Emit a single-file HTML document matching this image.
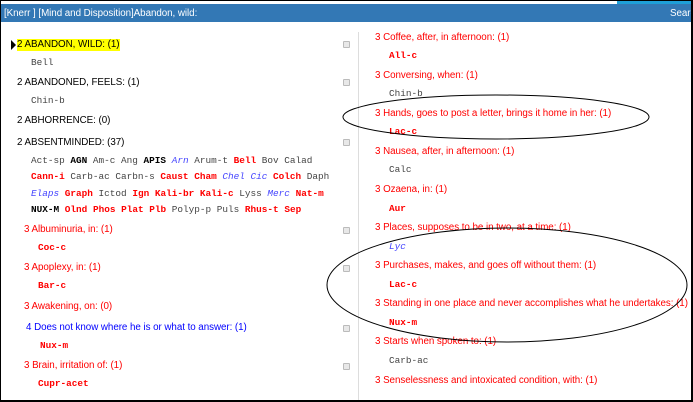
<!DOCTYPE html>
<html><head><meta charset="utf-8"><style>
*{margin:0;padding:0;box-sizing:border-box}
body{width:693px;height:402px;overflow:hidden;background:#fff;position:relative;font-family:"Liberation Sans",sans-serif}
.t{position:absolute;white-space:nowrap;font-size:9.8px;line-height:12px;letter-spacing:-0.05px}
.m{position:absolute;white-space:nowrap;font-family:"Liberation Mono",monospace;font-size:9.4px;line-height:12px;color:#444}
.r{color:#f00}.b{color:#000;font-weight:bold}.rb{color:#f00;font-weight:bold}.i{color:#44f;font-style:italic}.bl{color:#00f}
.cb{position:absolute;left:343px;width:7px;height:7px;border:1px solid #bbb;background:#e8e8e8;border-radius:1px}
</style></head><body>
<div style="position:absolute;left:0;top:0;width:693px;height:1px;background:#000"></div>
<div style="position:absolute;left:617px;top:1px;width:76px;height:3px;background:#1e9fd8"></div>
<div style="position:absolute;left:0;top:4px;width:693px;height:18px;background:#3378b5"></div>
<div class="t" style="left:4px;top:8px;color:#fff;font-size:9.8px">[Knerr ] [Mind and Disposition]Abandon, wild:</div>
<div class="t" style="left:670px;top:8px;color:#fff">Search</div>
<div style="position:absolute;left:0;top:0;width:1px;height:402px;background:#000"></div>
<div style="position:absolute;left:691px;top:0;width:2px;height:402px;background:#000"></div>
<div style="position:absolute;left:0;top:400px;width:693px;height:2px;background:#000"></div>
<div style="position:absolute;left:358px;top:32px;width:1px;height:368px;background:#ddd"></div>

<div style="position:absolute;left:11px;top:40px;width:0;height:0;border-top:5px solid transparent;border-bottom:5px solid transparent;border-left:5px solid #000"></div>
<div class="t" style="left:17px;top:39px;background:#ff0;padding-right:1px">2 ABANDON, WILD: (1)</div>
<div class="m" style="left:31px;top:57px">Bell</div>
<div class="t" style="left:17px;top:77px">2 ABANDONED, FEELS: (1)</div>
<div class="m" style="left:31px;top:95px">Chin-b</div>
<div class="t" style="left:17px;top:115px">2 ABHORRENCE: (0)</div>
<div class="t" style="left:17px;top:137px">2 ABSENTMINDED: (37)</div>
<div class="m" style="left:31px;top:155px">Act-sp <span class="b">AGN</span> Am-c Ang <span class="b">APIS</span> <span class="i">Arn</span> Arum-t <span class="rb">Bell</span> Bov Calad</div>
<div class="m" style="left:31px;top:171px"><span class="rb">Cann-i</span> Carb-ac Carbn-s <span class="rb">Caust</span> <span class="rb">Cham</span> <span class="i">Chel</span> <span class="i">Cic</span> <span class="rb">Colch</span> Daph</div>
<div class="m" style="left:31px;top:188px"><span class="i">Elaps</span> <span class="rb">Graph</span> Ictod <span class="rb">Ign</span> <span class="rb">Kali-br</span> <span class="rb">Kali-c</span> Lyss <span class="i">Merc</span> <span class="rb">Nat-m</span></div>
<div class="m" style="left:31px;top:204px"><span class="b">NUX-M</span> <span class="rb">Olnd</span> <span class="rb">Phos</span> <span class="rb">Plat</span> <span class="rb">Plb</span> Polyp-p Puls <span class="rb">Rhus-t</span> <span class="rb">Sep</span></div>
<div class="t r" style="left:24px;top:224px">3 Albuminuria, in: (1)</div>
<div class="m rb" style="left:38px;top:242px">Coc-c</div>
<div class="t r" style="left:24px;top:262px">3 Apoplexy, in: (1)</div>
<div class="m rb" style="left:38px;top:280px">Bar-c</div>
<div class="t r" style="left:24px;top:301px">3 Awakening, on: (0)</div>
<div class="t bl" style="left:26px;top:322px">4 Does not know where he is or what to answer: (1)</div>
<div class="m rb" style="left:40px;top:340px">Nux-m</div>
<div class="t r" style="left:24px;top:360px">3 Brain, irritation of: (1)</div>
<div class="m rb" style="left:38px;top:378px">Cupr-acet</div>

<div class="cb" style="top:41px"></div><div class="cb" style="top:79px"></div><div class="cb" style="top:139px"></div>
<div class="cb" style="top:227px"></div><div class="cb" style="top:265px"></div><div class="cb" style="top:325px"></div><div class="cb" style="top:363px"></div>

<div class="t r" style="left:375px;top:32px">3 Coffee, after, in afternoon: (1)</div>
<div class="m rb" style="left:389px;top:50px">All-c</div>
<div class="t r" style="left:375px;top:70px">3 Conversing, when: (1)</div>
<div class="m" style="left:389px;top:88px">Chin-b</div>
<div class="t r" style="left:375px;top:108px">3 Hands, goes to post a letter, brings it home in her: (1)</div>
<div class="m rb" style="left:389px;top:126px">Lac-c</div>
<div class="t r" style="left:375px;top:146px">3 Nausea, after, in afternoon: (1)</div>
<div class="m" style="left:389px;top:164px">Calc</div>
<div class="t r" style="left:375px;top:184px">3 Ozaena, in: (1)</div>
<div class="m rb" style="left:389px;top:203px">Aur</div>
<div class="t r" style="left:375px;top:222px">3 Places, supposes to be in two, at a time: (1)</div>
<div class="m i" style="left:389px;top:241px">Lyc</div>
<div class="t r" style="left:375px;top:260px">3 Purchases, makes, and goes off without them: (1)</div>
<div class="m rb" style="left:389px;top:279px">Lac-c</div>
<div class="t r" style="left:375px;top:298px">3 Standing in one place and never accomplishes what he undertakes: (1)</div>
<div class="m rb" style="left:389px;top:317px">Nux-m</div>
<div class="t r" style="left:375px;top:336px">3 Starts when spoken to: (1)</div>
<div class="m" style="left:389px;top:355px">Carb-ac</div>
<div class="t r" style="left:375px;top:375px">3 Senselessness and intoxicated condition, with: (1)</div>

<svg style="position:absolute;left:0;top:0" width="693" height="402">
<ellipse cx="496" cy="117" rx="153" ry="22" fill="none" stroke="#000" stroke-width="1"/>
<ellipse cx="507" cy="285" rx="180" ry="57" fill="none" stroke="#000" stroke-width="1"/>
</svg>
</body></html>
